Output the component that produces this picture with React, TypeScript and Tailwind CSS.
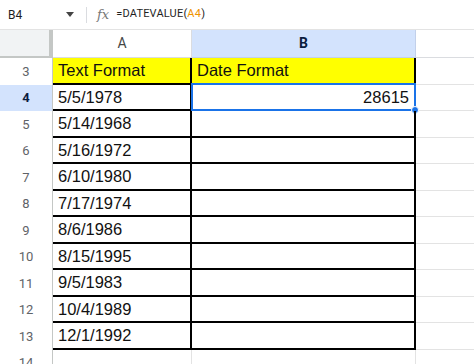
import React from 'react'

const rows: [number, string][] = [
  [4, '5/5/1978'],
  [5, '5/14/1968'],
  [6, '5/16/1972'],
  [7, '6/10/1980'],
  [8, '7/17/1974'],
  [9, '8/6/1986'],
  [10, '8/15/1995'],
  [11, '9/5/1983'],
  [12, '10/4/1989'],
  [13, '12/1/1992'],
]

const cellFont = { fontFamily: '"Liberation Sans", Arial, sans-serif' }

export default function App() {
  return (
    <div className="w-[474px] h-[364px] overflow-hidden bg-white" style={{ fontFamily: 'Roboto, "Liberation Sans", sans-serif' }}>
      {/* formula bar */}
      <div className="h-[30px] flex items-center border-b border-[#e3e3e3] text-[#1f1f1f]">
        <div className="w-[62px] pl-[8px] text-[12px]">B4</div>
        <svg width="8" height="5" viewBox="0 0 8 5" className="ml-[4px]">
          <path d="M0 0 L8 0 L4 5 Z" fill="#444" />
        </svg>
        <div className="ml-[12px] w-px h-[16px] bg-[#dadce0]" />
        <div className="ml-[10px] text-[13px] italic text-[#777]" style={{ fontFamily: '"DejaVu Serif", serif' }}>fx</div>
        <div className="ml-[7px] text-[11px] tracking-[0.2px]">
          =DATEVALUE(<span className="text-[#f09300]">A4</span>)
        </div>
      </div>

      {/* column headers */}
      <div className="grid grid-cols-[53px_139px_224px_1fr] h-[28px] text-[14px]">
        <div className="bg-[#f1f3f4] border-r-[4px] border-b-[2px] border-[#c4c7c5]" />
        <div className="flex items-center justify-center text-[#444746] border-r border-b border-[#dadce0] bg-white">A</div>
        <div className="flex items-center justify-center font-bold text-[#0b1d3f] border-r border-b border-[#c2d0ea] bg-[#d3e3fd]">B</div>
        <div className="border-b border-[#dadce0] bg-white" />
      </div>

      {/* row 3 header row */}
      <div className="grid grid-cols-[53px_139px_224px_1fr] h-[26.5px]" style={cellFont}>
        <div className="flex items-center justify-center text-[13px] text-[#5f6368] border-r border-[#c4c7c5]" style={{ fontFamily: 'Roboto, sans-serif' }}>3</div>
        <div className="flex items-center pl-[5px] bg-[#ffff00] border-r-2 border-b-2 border-black text-[16.5px] text-[#111]">Text Format</div>
        <div className="flex items-center pl-[5px] bg-[#ffff00] border-r-2 border-b-2 border-black text-[16.5px] text-[#111]">Date Format</div>
        <div className="border-b border-[#e3e3e3]" />
      </div>

      {rows.map(([n, text]) => (
        <div key={n} className="grid grid-cols-[53px_139px_224px_1fr] h-[26.5px]" style={cellFont}>
          <div
            className={
              n === 4
                ? 'flex items-center justify-center text-[13px] font-bold text-[#0b1d3f] bg-[#d3e3fd] border-r border-[#c4c7c5]'
                : 'flex items-center justify-center text-[13px] text-[#5f6368] border-r border-[#c4c7c5]'
            }
            style={{ fontFamily: 'Roboto, sans-serif' }}
          >
            {n}
          </div>
          <div className="flex items-center pl-[5px] border-r-2 border-b-2 border-black text-[16.5px] text-[#111]">{text}</div>
          <div className="relative flex items-center justify-end pr-[5px] border-r-2 border-b-2 border-black text-[16.5px] text-[#111]">
            {n === 4 && (
              <>
                <div className="absolute -left-[1px] -top-[2px] -right-[2px] -bottom-[2px] border-2 border-[#1a73e8]" />
                <div className="absolute -right-[5px] -bottom-[5px] w-[8px] h-[8px] rounded-full bg-[#1a73e8] border border-white" />
              </>
            )}
            {n === 4 ? '28615' : ''}
          </div>
          <div className="border-b border-[#e3e3e3]" />
        </div>
      ))}

      {/* row 14 partial */}
      <div className="grid grid-cols-[53px_139px_224px_1fr] h-[26.5px]">
        <div className="flex items-center justify-center text-[13px] text-[#5f6368] border-r border-[#c4c7c5]">14</div>
        <div className="border-r border-[#e3e3e3]" />
        <div className="border-r border-[#e3e3e3]" />
        <div />
      </div>
    </div>
  )
}
